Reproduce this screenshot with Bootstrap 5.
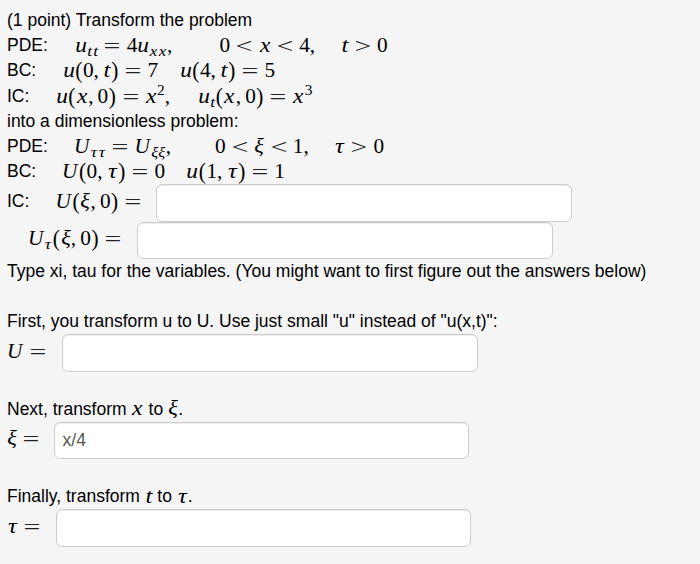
<!DOCTYPE html>
<html lang="en">
<head>
<meta charset="utf-8">
<meta name="viewport" content="width=device-width, initial-scale=1">
<title>Transform the problem</title>
<link href="https://cdn.jsdelivr.net/npm/bootstrap@5.3.0/dist/css/bootstrap.min.css" rel="stylesheet">
<style>
body{background:#f5f5f5;color:#000;font:17.5px/25px "Liberation Sans",Arial,sans-serif}
.problem{padding:8px 0 0 7px;white-space:nowrap}
.line{display:grid;height:25px;align-items:baseline}
.tall{height:26px;padding-top:1px}
.gap-line{margin-top:25px}
/* column starts of each equation line */
.c-pde1{grid-template-columns:68px 144.5px 121.5px auto}
.c-pde2{grid-template-columns:67px 141px 119px auto}
.c-bc1{grid-template-columns:55.5px 117px auto}
.c-bc2{grid-template-columns:55px 124px auto}
.c-ic{grid-template-columns:48.5px 142px auto}
.answer{display:flex;height:37.5px;line-height:35px}
.lead-ic{width:149px}.lead-ut{width:130px;padding-left:21px}
.lead-u{width:55px}.lead-xi{width:46.6px}.lead-tau{width:48.6px}
.lab-ic{display:inline-block;width:48.5px}
.answer .form-control{width:415.5px;height:37.5px;padding:0 8px;border:1px solid #ccc;border-radius:6px;background:#fff;color:#555;font:17.5px "Liberation Sans",Arial,sans-serif;box-shadow:inset 0 1px 1px rgba(0,0,0,.075)}
.answer #xi,.answer #tau{width:415px}
/* math atoms: each box has the advance width of its symbol */
.mx{font-family:"Liberation Serif",serif;font-size:21.3px;line-height:0;position:relative;top:.8px}
.mx i,.mx b{display:inline-block;width:.5em;text-align:center;font-weight:400}
.mx b{font-style:normal}
.mx .l{width:.572em;transform:scaleX(1.1)}
.mx .t{width:.361em;transform:scaleX(1.15)}
.mx .U{width:.767em;text-align:left}
.mx .x{width:.484em;transform:scaleX(1.05)}
.mx .ta{width:.517em;transform:scaleX(1.15)}
.mx .p{width:.389em;transform:scaleY(1.1)}
.mx .c{width:.445em;text-align:left}
.mx .r{width:1.334em}
.mx .r::before{content:attr(data-op);display:inline-block;transform:translateY(1.4px) scaleX(1.4);color:#222}
.mx sub,.mx sup{font-size:.72em;line-height:0}
.mx sub{bottom:-.27em}.mx sup{top:-.5em}
</style>
</head>
<body>
<main class="problem">
<div class="line">(1 point) Transform the problem</div>
<div class="line c-pde1"><span>PDE:</span>
<span class="mx"><i class="l">u</i><sub><i class="t">t</i><i class="t">t</i></sub><b class="r" data-op="="></b><b>4</b><i class="l">u</i><sub><i class="l">x</i><i class="l">x</i></sub><b class="c">,</b></span>
<span class="mx"><b>0</b><b class="r" data-op="&lt;"></b><i class="l">x</i><b class="r" data-op="&lt;"></b><b>4</b><b class="c">,</b></span>
<span class="mx"><i class="t">t</i><b class="r" data-op="&gt;"></b><b>0</b></span></div>
<div class="line c-bc1"><span>BC:</span>
<span class="mx"><i class="l">u</i><b class="p">(</b><b>0</b><b class="c">,</b><i class="t">t</i><b class="p">)</b><b class="r" data-op="="></b><b>7</b></span>
<span class="mx"><i class="l">u</i><b class="p">(</b><b>4</b><b class="c">,</b><i class="t">t</i><b class="p">)</b><b class="r" data-op="="></b><b>5</b></span></div>
<div class="line tall c-ic"><span>IC:</span>
<span class="mx"><i class="l">u</i><b class="p">(</b><i class="l">x</i><b class="c">,</b><b>0</b><b class="p">)</b><b class="r" data-op="="></b><i class="l">x</i><sup><b>2</b></sup><b class="c">,</b></span>
<span class="mx"><i class="l">u</i><sub><i class="t">t</i></sub><b class="p">(</b><i class="l">x</i><b class="c">,</b><b>0</b><b class="p">)</b><b class="r" data-op="="></b><i class="l">x</i><sup><b>3</b></sup></span></div>
<div class="line">into a dimensionless problem:</div>
<div class="line c-pde2"><span>PDE:</span>
<span class="mx"><i class="U">U</i><sub><i class="ta">τ</i><i class="ta">τ</i></sub><b class="r" data-op="="></b><i class="U">U</i><sub><i class="x">ξ</i><i class="x">ξ</i></sub><b class="c">,</b></span>
<span class="mx"><b>0</b><b class="r" data-op="&lt;"></b><i class="x">ξ</i><b class="r" data-op="&lt;"></b><b>1</b><b class="c">,</b></span>
<span class="mx"><i class="ta">τ</i><b class="r" data-op="&gt;"></b><b>0</b></span></div>
<div class="line c-bc2"><span>BC:</span>
<span class="mx"><i class="U">U</i><b class="p">(</b><b>0</b><b class="c">,</b><i class="ta">τ</i><b class="p">)</b><b class="r" data-op="="></b><b>0</b></span>
<span class="mx"><i class="l">u</i><b class="p">(</b><b>1</b><b class="c">,</b><i class="ta">τ</i><b class="p">)</b><b class="r" data-op="="></b><b>1</b></span></div>
<div class="answer"><label class="lead-ic" for="ic"><span class="lab-ic">IC:</span><span class="mx"><i class="U">U</i><b class="p">(</b><i class="x">ξ</i><b class="c">,</b><b>0</b><b class="p">)</b><b class="r" data-op="="></b></span></label><input id="ic" class="form-control" type="text"></div>
<div class="answer"><label class="lead-ut" for="ut"><span class="mx"><i class="U">U</i><sub><i class="ta">τ</i></sub><b class="p">(</b><i class="x">ξ</i><b class="c">,</b><b>0</b><b class="p">)</b><b class="r" data-op="="></b></span></label><input id="ut" class="form-control" type="text"></div>
<div class="line">Type xi, tau for the variables. (You might want to first figure out the answers below)</div>
<div class="line gap-line">First, you transform u to U. Use just small "u" instead of "u(x,t)":</div>
<div class="answer"><label class="lead-u" for="bigu"><span class="mx"><i class="U">U</i><b class="r" data-op="="></b></span></label><input id="bigu" class="form-control" type="text"></div>
<div class="line gap-line"><span>Next, transform <span class="mx"><i class="l">x</i></span> to <span class="mx"><i class="x">ξ</i></span>.</span></div>
<div class="answer"><label class="lead-xi" for="xi"><span class="mx"><i class="x">ξ</i><b class="r" data-op="="></b></span></label><input id="xi" class="form-control" type="text" value="x/4"></div>
<div class="line gap-line"><span>Finally, transform <span class="mx"><i class="t">t</i></span> to <span class="mx"><i class="ta">τ</i></span>.</span></div>
<div class="answer"><label class="lead-tau" for="tau"><span class="mx"><i class="ta">τ</i><b class="r" data-op="="></b></span></label><input id="tau" class="form-control" type="text"></div>
</main>
<script src="https://cdn.jsdelivr.net/npm/bootstrap@5.3.0/dist/js/bootstrap.bundle.min.js"></script>
</body>
</html>
